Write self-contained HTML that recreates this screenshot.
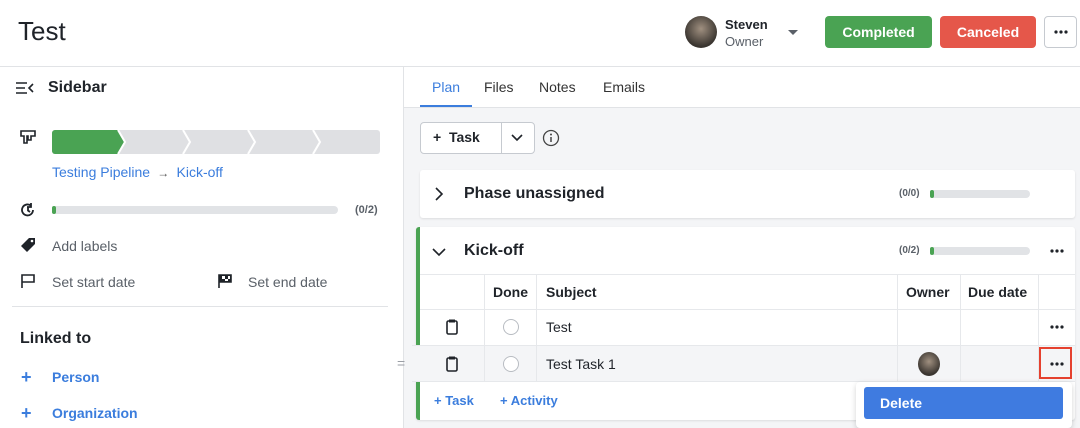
<!DOCTYPE html>
<html><head><meta charset="utf-8"><style>
*{box-sizing:border-box;margin:0;padding:0}
body{width:1080px;height:428px;overflow:hidden;font-family:"Liberation Sans",sans-serif;color:#1f2329;background:#fff;position:relative}
.a{position:absolute}
.btn{position:absolute;border-radius:4px;color:#fff;font-weight:bold;font-size:14px;display:flex;align-items:center;justify-content:center}
.g{color:#5a6068}
.link{color:#3b7ddd}
.cell{position:absolute;border-left:1px solid #e6e8eb;height:100%;top:0}
</style></head><body>
<div class="a" style="left:18px;top:16px;font-size:26px">Test</div>
<div class="a" style="left:685px;top:16px;width:32px;height:32px;border-radius:50%;background:radial-gradient(circle at 50% 40%,#a09080,#3a3530 70%)"></div>
<div class="a" style="left:725px;top:17px;font-size:13px;font-weight:bold">Steven</div>
<div class="a g" style="left:725px;top:34px;font-size:13px">Owner</div>
<div class="a" style="left:788px;top:30px;border:5px solid transparent;border-top:5px solid #5a6068"></div>
<div class="btn" style="left:825px;top:16px;width:107px;height:32px;background:#4aa353">Completed</div>
<div class="btn" style="left:940px;top:16px;width:96px;height:32px;background:#e5574a">Canceled</div>
<div class="btn" style="left:1044px;top:16px;width:33px;height:32px;border:1px solid #c6cad0"><svg width="14" height="4"><circle cx="2" cy="2" r="1.6" fill="#1f2329"/><circle cx="7" cy="2" r="1.6" fill="#1f2329"/><circle cx="12" cy="2" r="1.6" fill="#1f2329"/></svg></div>
<div class="a" style="left:0;top:66px;width:1080px;height:1px;background:#e1e3e6"></div>
<div class="a" style="left:403px;top:67px;width:1px;height:361px;background:#e1e3e6"></div>
<!-- sidebar -->
<svg class="a" style="left:15px;top:80px" width="20" height="16"><path d="M1 3h11M1 8h9M1 13h11M18 4l-4 4 4 4" stroke="#1f2329" stroke-width="1.6" fill="none"/></svg>
<div class="a" style="left:48px;top:79px;font-size:16px;font-weight:bold">Sidebar</div>
<svg class="a" style="left:20px;top:130px" width="16" height="16"><path d="M1 1h14v5h-4v4h-3v-4h-1v7h-3v-7h-3z" stroke="#1f2329" stroke-width="1.6" fill="none"/></svg>
<svg class="a" style="left:52px;top:130px" width="328" height="24">
<rect width="328" height="24" rx="3" fill="#dfe0e3"/>
<path d="M3 0h63l7 12-7 12h-63a3 3 0 0 1-3-3v-18a3 3 0 0 1 3-3z" fill="#4aa353"/>
<path d="M66 0l7 12-7 12M131 0l7 12-7 12M196 0l7 12-7 12M261 0l7 12-7 12" stroke="#fff" stroke-width="2" fill="none"/>
</svg>
<div class="a" style="left:52px;top:164px;font-size:14px"><span class="link">Testing Pipeline</span> <span style="color:#555;font-size:12px">&nbsp;→&nbsp;</span> <span class="link">Kick-off</span></div>
<svg class="a" style="left:20px;top:202px" width="16" height="16"><path d="M13 8a5.5 5.5 0 1 1-2-4.3M11 1v4h-4M8 5v3.5l2 1.5" stroke="#1f2329" stroke-width="1.8" fill="none"/></svg>
<div class="a" style="left:52px;top:206px;width:286px;height:8px;border-radius:4px;background:#e1e3e6"><div style="width:4px;height:8px;border-radius:4px;background:#4aa353"></div></div>
<div class="a g" style="left:355px;top:204px;font-size:11px;font-weight:bold">(0/2)</div>
<svg class="a" style="left:20px;top:237px" width="16" height="16"><path d="M9 1h6v6l-8 8-6-6z" fill="#1f2329"/><circle cx="12" cy="4" r="1.3" fill="#fff"/></svg>
<div class="a g" style="left:52px;top:238px;font-size:14px">Add labels</div>
<svg class="a" style="left:20px;top:273px" width="16" height="16"><path d="M2 15V2h12v7H2" stroke="#1f2329" stroke-width="1.6" fill="none"/></svg>
<div class="a g" style="left:52px;top:274px;font-size:14px">Set start date</div>
<svg class="a" style="left:217px;top:273px" width="16" height="16"><path d="M2 15V2h12v7H2" stroke="#1f2329" stroke-width="1.6" fill="#1f2329"/><path d="M5 3h3v3h-3zM8 6h3v2h-3zM11 3h2v3h-2z" fill="#fff"/></svg>
<div class="a g" style="left:248px;top:274px;font-size:14px">Set end date</div>
<div class="a" style="left:12px;top:306px;width:376px;height:1px;background:#e1e3e6"></div>
<div class="a" style="left:20px;top:330px;font-size:16px;font-weight:bold">Linked to</div>
<div class="a link" style="left:21px;top:367px;font-size:18px;font-weight:bold">+</div>
<div class="a link" style="left:52px;top:369px;font-size:14px;font-weight:bold">Person</div>
<div class="a link" style="left:21px;top:403px;font-size:18px;font-weight:bold">+</div>
<div class="a link" style="left:52px;top:405px;font-size:14px;font-weight:bold">Organization</div>
<!-- tabs -->
<div class="a" style="left:432px;top:79px;font-size:14px;color:#3b7ddd">Plan</div>
<div class="a" style="left:420px;top:105px;width:52px;height:2px;background:#3b7ddd"></div>
<div class="a" style="left:484px;top:79px;font-size:14px;color:#333">Files</div>
<div class="a" style="left:539px;top:79px;font-size:14px;color:#333">Notes</div>
<div class="a" style="left:603px;top:79px;font-size:14px;color:#333">Emails</div>
<div class="a" style="left:404px;top:107px;width:676px;height:321px;background:#f4f5f7;border-top:1px solid #e1e3e6"></div>
<div class="a" style="left:420px;top:122px;width:115px;height:32px;background:#fff;border:1px solid #c6cad0;border-radius:4px"></div>
<div class="a" style="left:501px;top:122px;width:1px;height:32px;background:#c6cad0"></div>
<div class="a" style="left:433px;top:129px;font-size:14px;font-weight:bold">+&nbsp; Task</div>
<svg class="a" style="left:511px;top:133px" width="12" height="10"><path d="M1 2l5 5 5-5" stroke="#1f2329" stroke-width="1.6" fill="none"/></svg>
<svg class="a" style="left:542px;top:129px" width="18" height="18"><circle cx="9" cy="9" r="7.5" stroke="#444" stroke-width="1.3" fill="none"/><path d="M9 8v5" stroke="#444" stroke-width="1.5"/><circle cx="9" cy="5.5" r="1" fill="#444"/></svg>
<!-- phase unassigned -->
<div class="a" style="left:420px;top:170px;width:655px;height:48px;background:#fff;border-radius:3px;box-shadow:0 1px 2px rgba(0,0,0,.1)"></div>
<svg class="a" style="left:433px;top:187px" width="12" height="14"><path d="M3 1l6 6-6 6" stroke="#1f2329" stroke-width="1.6" fill="none"/></svg>
<div class="a" style="left:464px;top:185px;font-size:16px;font-weight:bold">Phase unassigned</div>
<div class="a g" style="left:899px;top:188px;font-size:10px;font-weight:bold">(0/0)</div>
<div class="a" style="left:930px;top:190px;width:100px;height:8px;border-radius:4px;background:#e1e3e6"><div style="width:4px;height:8px;border-radius:4px;background:#4aa353"></div></div>
<!-- kickoff -->
<div class="a" style="left:416px;top:227px;width:659px;height:193px;background:#fff;border-left:4px solid #4aa353;border-radius:3px;box-shadow:0 1px 2px rgba(0,0,0,.1)"></div>
<svg class="a" style="left:432px;top:246px" width="14" height="12"><path d="M1 3l6 6 6-6" stroke="#1f2329" stroke-width="1.6" fill="none"/></svg>
<div class="a" style="left:464px;top:242px;font-size:16px;font-weight:bold">Kick-off</div>
<div class="a g" style="left:899px;top:245px;font-size:10px;font-weight:bold">(0/2)</div>
<div class="a" style="left:930px;top:247px;width:100px;height:8px;border-radius:4px;background:#e1e3e6"><div style="width:4px;height:8px;border-radius:4px;background:#4aa353"></div></div>
<svg class="a" style="left:1050px;top:249px" width="14" height="4"><circle cx="2" cy="2" r="1.6" fill="#1f2329"/><circle cx="7" cy="2" r="1.6" fill="#1f2329"/><circle cx="12" cy="2" r="1.6" fill="#1f2329"/></svg>
<div class="a" style="left:420px;top:274px;width:655px;height:1px;background:#e6e8eb"></div>
<div class="a" style="left:420px;top:309px;width:655px;height:1px;background:#e6e8eb"></div>
<div class="a" style="left:412px;top:345px;width:663px;height:37px;background:#f4f5f7;border-top:1px solid #e6e8eb;border-bottom:1px solid #e6e8eb"></div>
<div class="a" style="left:420px;top:274px;width:655px;height:108px">
<div class="cell" style="left:64px"></div><div class="cell" style="left:116px"></div><div class="cell" style="left:477px"></div><div class="cell" style="left:540px"></div><div class="cell" style="left:618px"></div>
</div>
<div class="a" style="left:493px;top:284px;font-size:14px;font-weight:bold">Done</div>
<div class="a" style="left:546px;top:284px;font-size:14px;font-weight:bold">Subject</div>
<div class="a" style="left:906px;top:284px;font-size:14px;font-weight:bold">Owner</div>
<div class="a" style="left:968px;top:284px;font-size:14px;font-weight:bold">Due date</div>
<svg class="a" style="left:445px;top:319px" width="14" height="16"><rect x="2" y="2" width="10" height="13" rx="1.5" stroke="#1f2329" stroke-width="1.6" fill="none"/><rect x="4" y="0.5" width="6" height="3" fill="#1f2329"/></svg>
<svg class="a" style="left:445px;top:356px" width="14" height="16"><rect x="2" y="2" width="10" height="13" rx="1.5" stroke="#1f2329" stroke-width="1.6" fill="none"/><rect x="4" y="0.5" width="6" height="3" fill="#1f2329"/></svg>
<div class="a" style="left:503px;top:319px;width:16px;height:16px;border-radius:50%;border:1.5px solid #b8bcc2"></div>
<div class="a" style="left:503px;top:356px;width:16px;height:16px;border-radius:50%;border:1.5px solid #b8bcc2;background:#fff"></div>
<div class="a" style="left:546px;top:319px;font-size:14px">Test</div>
<div class="a" style="left:546px;top:356px;font-size:14px">Test Task 1</div>
<div class="a" style="left:918px;top:352px;width:22px;height:24px;border-radius:50%;background:radial-gradient(circle at 50% 40%,#a09080,#3a3530 70%)"></div>
<svg class="a" style="left:1050px;top:325px" width="14" height="4"><circle cx="2" cy="2" r="1.6" fill="#1f2329"/><circle cx="7" cy="2" r="1.6" fill="#1f2329"/><circle cx="12" cy="2" r="1.6" fill="#1f2329"/></svg>
<div class="a" style="left:397px;top:355px;color:#9a9ea5;font-size:14px">=</div>
<div class="a" style="left:1039px;top:347px;width:33px;height:32px;border:2px solid #e5412f"></div>
<svg class="a" style="left:1050px;top:362px" width="14" height="4"><circle cx="2" cy="2" r="1.6" fill="#1f2329"/><circle cx="7" cy="2" r="1.6" fill="#1f2329"/><circle cx="12" cy="2" r="1.6" fill="#1f2329"/></svg>
<div class="a link" style="left:434px;top:393px;font-size:13px;font-weight:bold">+ Task</div>
<div class="a link" style="left:500px;top:393px;font-size:13px;font-weight:bold">+ Activity</div>
<div class="a" style="left:856px;top:382px;width:216px;height:46px;background:#fff;border-radius:4px;box-shadow:0 2px 6px rgba(0,0,0,.18)"></div>
<div class="a" style="left:864px;top:387px;width:199px;height:32px;background:#3f7be0;border-radius:3px;color:#fff;font-size:14px;font-weight:bold;padding:8px 0 0 16px">Delete</div>
</body></html>
